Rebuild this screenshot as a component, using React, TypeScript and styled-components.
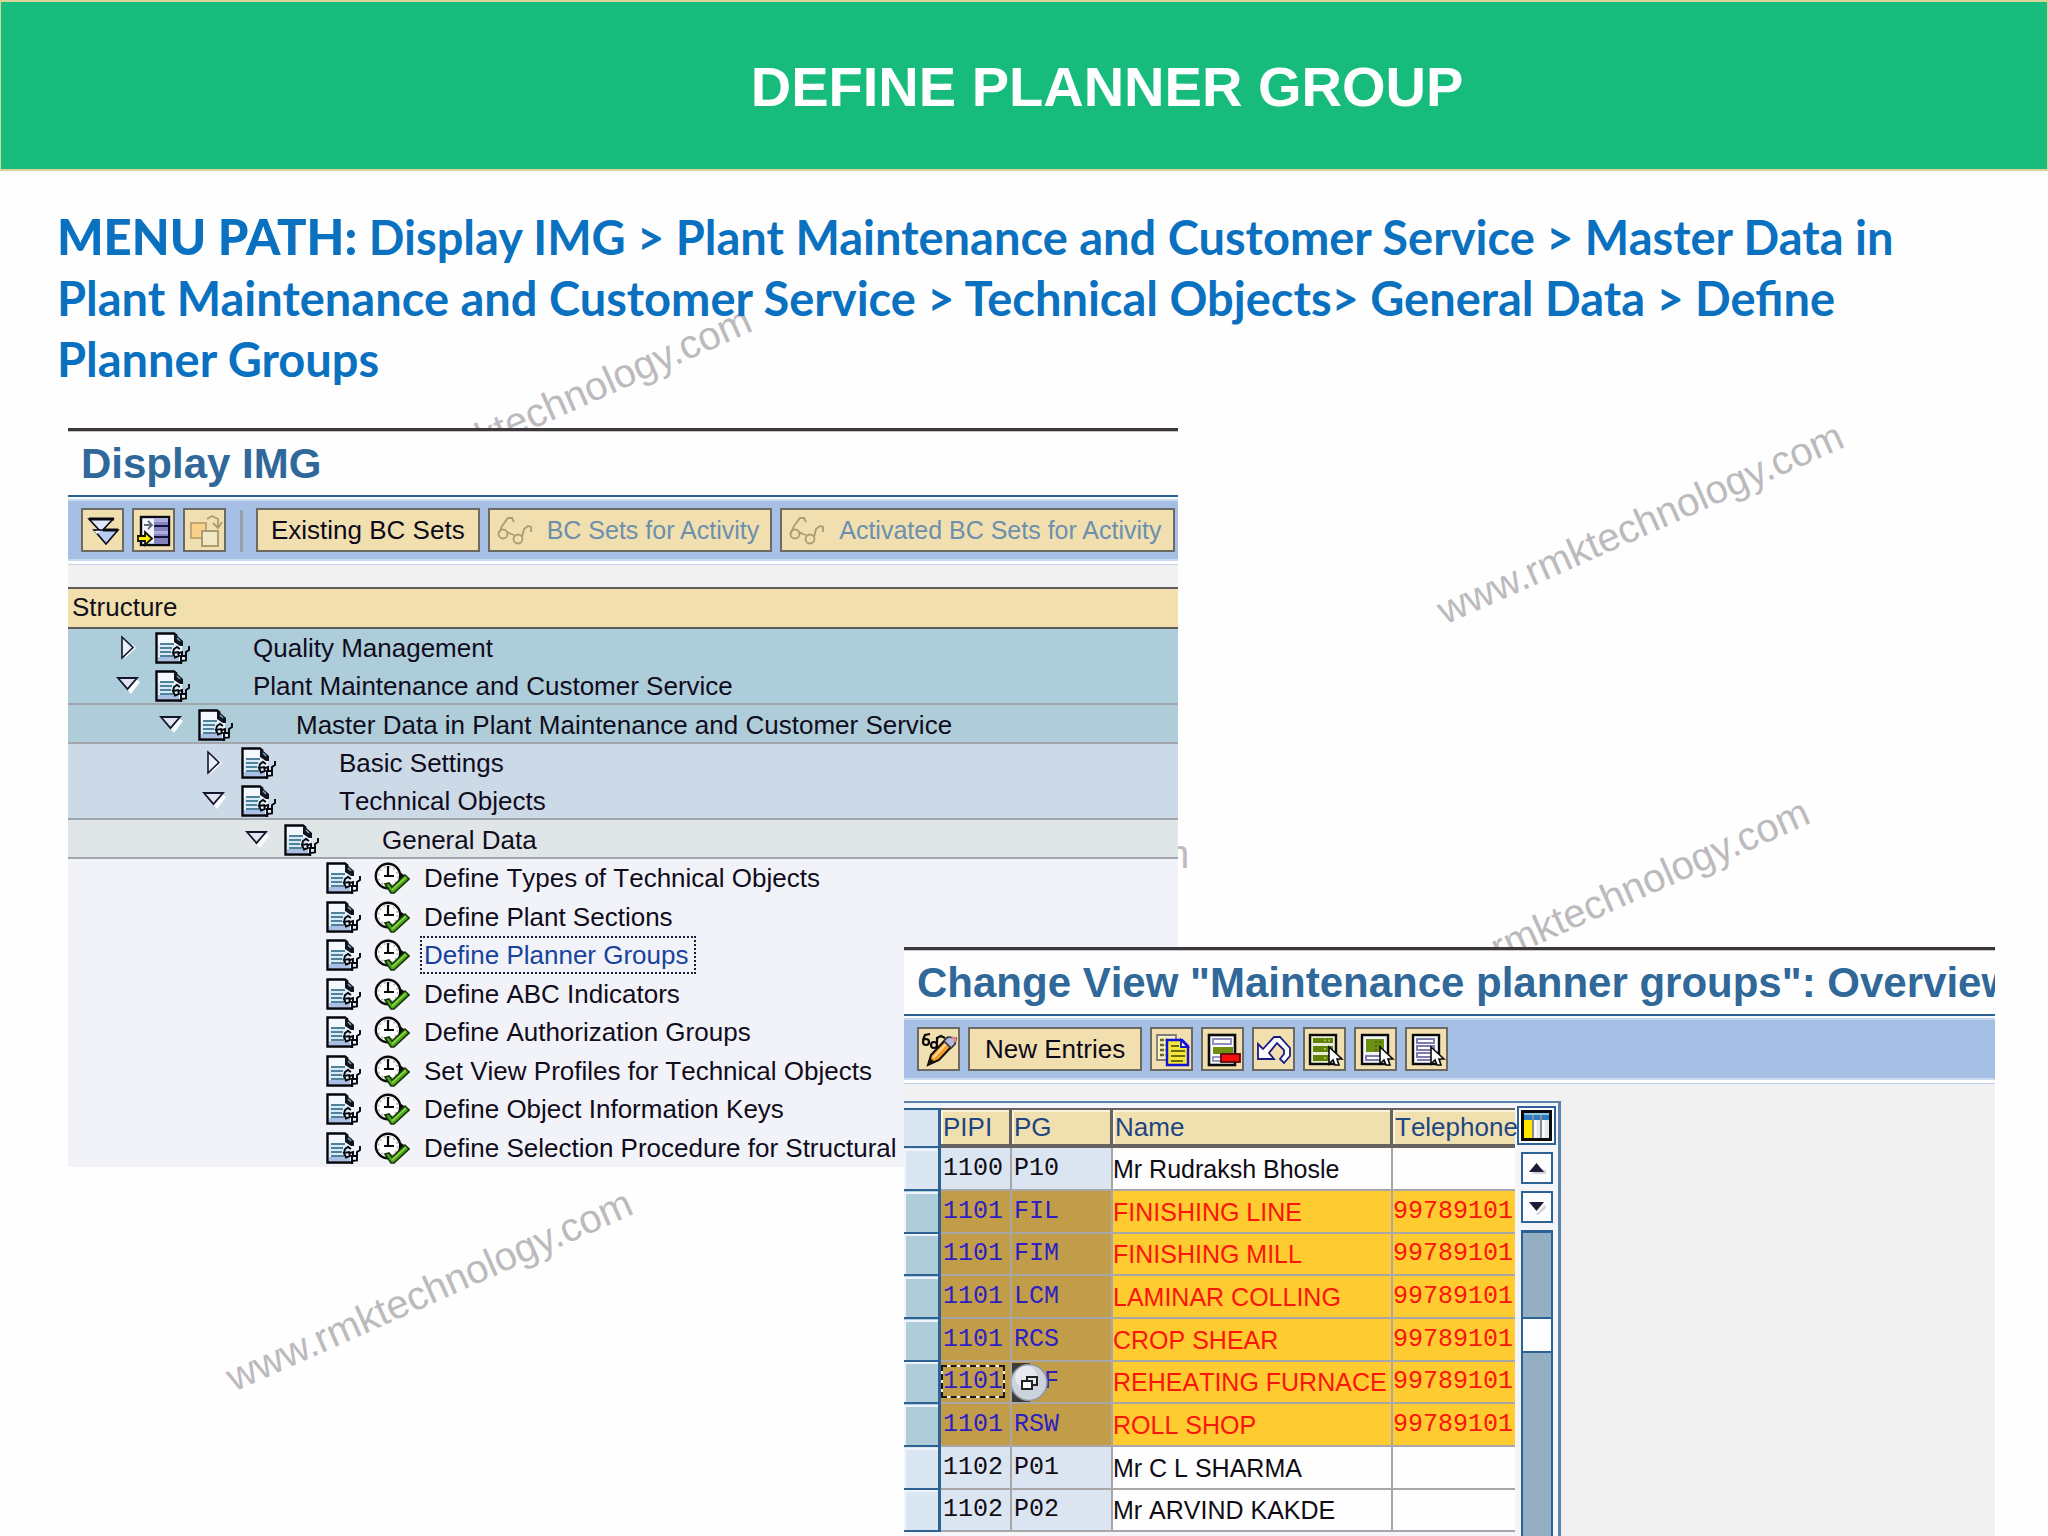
import React from "react";
import styled, { createGlobalStyle, css } from "styled-components";

const sans = `"Liberation Sans", Arial, sans-serif`;
const mono = `"Liberation Mono", "Courier New", monospace`;

const GlobalStyle = createGlobalStyle`
  *, *::before, *::after { box-sizing: border-box; }
  body { margin: 0; background: #fefefe; font-family: ${sans}; font-kerning: none; }
  svg { display: block; flex: none; }
`;

const Slide = styled.main`
  position: relative;
  display: flex;
  flex-direction: column;
  height: 100vh;
  overflow: hidden;
  background: #fefefe;
`;

const Banner = styled.header`
  flex: none;
  padding: 53px 0 50px 166px;
  border: 2px solid #d9d49b;
  border-width: 2px 1px;
  background: #17bc7c;
  text-align: center;
`;

const BannerTitle = styled.h1`
  margin: 0;
  color: #fff;
  font-size: 56px;
  line-height: 64px;
  font-weight: 700;
`;

const MenuPath = styled.p`
  position: relative;
  flex: none;
  margin: 0;
  padding: 35px 57px 38px;
  color: #0a70c0;
  font-family: Lato, "Open Sans", sans-serif;
  font-size: 47px;
  line-height: 61px;
  font-weight: 700;
  font-kerning: normal;
  white-space: nowrap;
`;

const MenuPathLabel = styled.strong`
  font-size: 49px;
`;

const Stage = styled.div`
  flex: 1;
  min-height: 0;
  display: grid;
  grid-template-columns: 68fr 836fr 274fr 817fr 53fr;
  grid-template-rows: 519px minmax(0, 1fr);
`;

const SapWindow = styled.section<{ $front?: boolean }>`
  position: relative;
  display: flex;
  flex-direction: column;
  min-width: 0;
  overflow: hidden;
  border-top: 3px solid #3b373b;
  background: #f1f1f2;
  ${({ $front }) =>
    $front
      ? css`
          grid-column: 3 / 5;
          grid-row: 2;
        `
      : css`
          grid-column: 2 / 4;
          grid-row: 1 / 3;
          align-self: start;
        `}
`;

const WindowTitle = styled.h2`
  flex: none;
  margin: 0;
  padding: 8px 13px 7px;
  border-top: 1px solid #c9c5c9;
  border-bottom: 2px solid #2c608f;
  background: #fefefe;
  color: #2f6899;
  font-size: 42px;
  line-height: 48px;
  font-weight: 700;
  white-space: nowrap;
  overflow: hidden;
`;

const Toolbar = styled.div`
  flex: none;
  display: flex;
  gap: 8px;
  padding: 7px 13px;
  background: #a5c0e4;
  box-shadow: 0 -2px 0 #c9d9ef, 0 -4px 0 #f4f8fd, 0 2px 0 #c9d9ef, 0 5px 0 #fff, 0 6px 0 #c5d3e8;
  margin: 4px 0 6px;
`;

const ToolButton = styled.button<{ $icon?: boolean; $dim?: boolean; $wide?: boolean }>`
  flex: none;
  display: flex;
  align-items: center;
  justify-content: center;
  gap: 14px;
  width: ${({ $icon }) => ($icon ? "43px" : "auto")};
  height: 44px;
  padding: 0 ${({ $icon, $dim, $wide }) => ($icon ? 0 : $dim ? 11 : $wide ? 15 : 13)}px;
  padding-left: ${({ $dim, $icon }) => ($dim && !$icon ? "7px" : undefined)};
  border: 2px solid #6c6862;
  border-radius: 0;
  background: #f1dfb0;
  color: ${({ $dim }) => ($dim ? "#6c8fae" : "#0c0a18")};
  font-family: ${sans};
  font-size: ${({ $dim }) => ($dim ? 25 : 26)}px;
  line-height: 32px;
  white-space: nowrap;
`;

const Divider = styled.span`
  flex: none;
  width: 3px;
  margin: 2px 5px 0 6px;
  background: #98a0ac;
`;

/* ---- structure tree ---- */

const StructureHeader = styled.div`
  margin-top: 22px;
  padding: 2px 4px 4px;
  border: 2px solid #5f5c5c;
  border-width: 2px 0;
  background: #f1e0ae;
  color: #14101a;
  font-size: 26px;
  line-height: 32px;
`;

const Tree = styled.ul`
  margin: 0;
  padding: 0;
  list-style: none;
  background: #f2f3f8;
`;

const levelFill = ["#aecddb", "#aecdd9", "#ccdae8", "#e0e5e8"];

const FolderRow = styled.li<{ $level: number; $line: boolean }>`
  display: flex;
  align-items: center;
  height: ${({ $level }) => ($level % 2 ? 39 : 38)}px;
  padding-left: ${({ $level }) => 48 + 43 * $level}px;
  background: ${({ $level }) => levelFill[$level]};
  box-shadow: ${({ $line }) => ($line ? "inset 0 -2px 0 #a2a6ac" : "none")};
  color: #100c1c;
  font-size: 26px;
  line-height: 36px;
  white-space: nowrap;
`;

const Arrow = styled.span`
  display: flex;
  justify-content: center;
  width: 24px;
  margin-right: 15px;
`;

const FolderName = styled.span`
  margin-left: 62px;
`;

const ActivityRow = styled.li`
  display: flex;
  align-items: center;
  height: 38px;
  padding-left: 258px;
  color: #100c1c;
  font-size: 26px;
  line-height: 34px;
  white-space: nowrap;
  &:nth-child(even) {
    height: 39px;
  }
  svg + svg {
    margin-left: 12px;
  }
`;

const ActivityName = styled.span<{ $active: boolean }>`
  margin-left: 10px;
  padding: 0 6px 0 2px;
  border: 2px dotted ${({ $active }) => ($active ? "#1c1c3c" : "transparent")};
  color: ${({ $active }) => ($active ? "#17439c" : "inherit")};
`;

/* ---- planner group table ---- */

const TableFrame = styled.div`
  flex: 1;
  align-self: flex-start;
  display: flex;
  margin-top: 17px;
  border: 2px solid #5b84ad;
  border-width: 2px 3px 0 0;
  background: #f3f5f8;
  min-height: 0;
`;

const Grid = styled.table`
  align-self: flex-start;
  margin-top: 5px;
  width: 611px;
  table-layout: fixed;
  border-collapse: separate;
  border-spacing: 0;
  color: #100c14;
`;

const Col = styled.col<{ $w: number }>`
  width: ${({ $w }) => $w}px;
`;

const Head = styled.th`
  height: 40px;
  padding: 0 0 0 2px;
  border: solid #65625f;
  border-width: 2px 3px 4px 0;
  background: #f0e0b0;
  box-shadow: inset 2px 2px 0 #faf3dc;
  color: #1f4680;
  font-size: 26px;
  line-height: 32px;
  font-weight: 400;
  text-align: left;
  white-space: nowrap;
  &:last-child {
    border-right: 0;
  }
`;

const CornerHead = styled.td`
  padding: 0;
  border: solid #2c6294;
  border-width: 2px 3px 2px 0;
  background: #d9e6f2;
`;

const Row = styled.tr`
  height: 43px;
  &:nth-child(3n) {
    height: 42px;
  }
`;

const SelectCell = styled.td<{ $marked: boolean }>`
  padding: 0;
  border: solid #2c6294;
  border-width: 0 3px 2px 0;
  background: ${({ $marked }) => ($marked ? "#aecdd9" : "#dae6f2")};
`;

const SelectButton = styled.button`
  display: block;
  width: 100%;
  height: 40px;
  padding: 0;
  border: solid #eef4fa;
  border-width: 2px 0 0 2px;
  background: transparent;
`;

const Cell = styled.td<{ $kind: "key" | "name" | "phone"; $marked: boolean }>`
  position: relative;
  padding: 0 0 0 ${({ $kind }) => ($kind === "key" ? 2 : 0)}px;
  border: solid #a9a6a8;
  border-width: 0 2px 2px 0;
  background: ${({ $kind, $marked }) =>
    $kind === "key" ? ($marked ? "#c29d49" : "#dbe5f1") : $marked ? "#fecb31" : "#fefefe"};
  color: ${({ $kind, $marked }) => ($marked ? ($kind === "key" ? "#2c1fc4" : "#fb1408") : "inherit")};
  font-family: ${({ $kind }) => ($kind === "name" ? sans : mono)};
  font-size: 25px;
  line-height: 32px;
  white-space: nowrap;
  &:last-child {
    border-right: 0;
  }
`;

const FocusedValue = styled.span`
  outline: 2px dashed #1a1620;
  box-shadow: 0 0 0 2px #f6ecd2;
`;

const PickBadge = styled.button`
  position: absolute;
  left: 0;
  top: 1px;
  padding: 0;
  border: 0;
  background: transparent;
`;

const ScrollColumn = styled.div`
  display: flex;
  flex-direction: column;
  align-items: center;
  gap: 7px;
  width: 43px;
  padding-top: 3px;
`;

const ConfigButton = styled.button`
  flex: none;
  position: relative;
  width: 39px;
  height: 39px;
  padding: 2px;
  border: 2px solid #2c6294;
  background: #fff;
`;

const ScrollButton = styled.button`
  flex: none;
  display: flex;
  align-items: center;
  justify-content: center;
  width: 32px;
  height: 32px;
  padding: 0;
  border: 2px solid #2c6294;
  background: #fdfdff;
`;

const Track = styled.div`
  flex: 1;
  width: 32px;
  padding-top: 84px;
  border: solid #2c6294;
  border-width: 3px 2px 0;
  background: #95afc2;
`;

const Thumb = styled.div`
  height: 36px;
  border: solid #2c6294;
  border-width: 2px 0;
  background: #fdfdff;
`;

const Watermark = styled.span<{ $x: number; $y: number; $angle: number }>`
  position: absolute;
  left: ${({ $x }) => $x}px;
  top: ${({ $y }) => $y}px;
  color: #bcbabd;
  font-size: 40px;
  line-height: 40px;
  font-kerning: normal;
  white-space: nowrap;
  transform: rotate(${({ $angle }) => $angle}deg);
  transform-origin: 0 34px;
`;

/* ---- icons ---- */

const DocIcon = () => (
  <svg width="36" height="32" viewBox="0 0 36 32" aria-hidden="true">
    <path d="M2 2H20L27 9V30H2Z" fill="#f4f9ff" />
    <path d="M3 13H24V24H3Z" fill="#d8ebf6" />
    <path d="M3 25H24V29H3Z" fill="#a9bfe6" />
    <path d="M5 12H19M5 16H17M5 20H16M5 24H18" stroke="#4f8299" strokeWidth="1.8" />
    <path d="M26 30.500H1.500V1.500H19L22 4" fill="none" stroke="#05060c" strokeWidth="2.4" />
    <path d="M19 1L28 9V14H25L19 10Z" fill="#10141c" />
    <path d="M22 6l3 3" stroke="#7fa0b8" strokeWidth="1.6" />
    <path d="M26 29v3" stroke="#05060c" strokeWidth="2.4" />
    <g fill="none" stroke="#05060c" strokeWidth="1.9">
      <path d="M18 21L19 17L22 15L25 17" />
      <path d="M18 21L20 25.500L24 24L23 20Z" fill="#e6f0f8" />
      <path d="M26 24L26 29L31 28.500L31 24Z" fill="#e6f0f8" />
      <path d="M24 21L27 20V24M31 24L31 20L34 18V14" />
    </g>
  </svg>
);

const ClockIcon = () => (
  <svg width="36" height="32" viewBox="0 0 36 32" aria-hidden="true">
    <path d="M27 12L34 17L29 22Z" fill="#4a7a18" stroke="#0c0f08" strokeWidth="2" />
    <circle cx="14" cy="14" r="12.2" fill="#fff" stroke="#0a0a0a" strokeWidth="2.4" />
    <circle cx="14" cy="14" r="9.5" fill="none" stroke="#b8bac2" strokeWidth="1.6" strokeDasharray="2 3" />
    <path d="M14 4V14H20M10 14H14" fill="none" stroke="#0a0a0a" strokeWidth="2.2" />
    <path d="M11 22L15 21L18 25L31 13L35 17L20 31H17Z" fill="#4ea81c" stroke="#16330a" strokeWidth="1.6" />
    <path d="M18 28L32 15" stroke="#8fd84a" strokeWidth="1.6" />
  </svg>
);

const ClosedArrow = () => (
  <svg width="16" height="26" viewBox="0 0 16 26" aria-hidden="true">
    <path d="M4 24L16 13L12 9L6 20Z" fill="#fafcff" />
    <path d="M2 2L13 12.5L2 23Z" fill="#e6eef8" stroke="#14142c" strokeWidth="1.6" />
  </svg>
);

const OpenArrow = () => (
  <svg width="24" height="20" viewBox="0 0 24 20" aria-hidden="true">
    <path d="M10 12L15 18L24 6L20 3Z" fill="#fafcff" />
    <path d="M2 2H21L11.5 13Z" fill="#dfe3f2" stroke="#14142c" strokeWidth="1.8" />
  </svg>
);

const ExpandIcon = () => (
  <svg width="36" height="36" viewBox="0 0 36 36" aria-hidden="true">
    <path d="M4 7H28L16 20Z" fill="#dfe9fb" stroke="#0a0a14" strokeWidth="1.6" />
    <path d="M4 7H29" stroke="#0a0a14" strokeWidth="3" />
    <path d="M9 18H33L21 32Z" fill="#b9cdf3" stroke="#0a0a14" strokeWidth="1.6" />
    <path d="M18 18H33" stroke="#0a0a14" strokeWidth="3" />
    <path d="M9 19L15 19L12 22Z" fill="#fff" />
  </svg>
);

const PositionIcon = () => (
  <svg width="36" height="36" viewBox="0 0 36 36" aria-hidden="true">
    <rect x="5" y="5" width="28" height="28" fill="#f3f5fb" stroke="#0a0a14" strokeWidth="2.4" />
    <rect x="18" y="6" width="14" height="26" fill="#8583bc" />
    <path d="M18 6H32V10H18ZM18 19H32V22H18Z" fill="#aeaede" />
    <path d="M18 14H32M18 25H32" stroke="#14143c" strokeWidth="1.8" />
    <path d="M8 13H16M12 9L16 13L12 17" fill="none" stroke="#5f6d80" strokeWidth="1.8" />
    <path d="M2 24H9V20L16 26.500L9 33V29H2Z" fill="#ffee00" stroke="#14140a" strokeWidth="1.8" />
  </svg>
);

const SwapIcon = () => (
  <svg width="36" height="36" viewBox="0 0 36 36" aria-hidden="true">
    <rect x="4" y="11" width="15" height="15" fill="#fbd08a" stroke="#b9a274" strokeWidth="1.8" />
    <rect x="15" y="19" width="16" height="15" fill="#f3e8c4" stroke="#a99c76" strokeWidth="2" />
    <path d="M20 7L25 4L31 7V15M26 11L31 16L35 10" fill="none" stroke="#a99c76" strokeWidth="1.8" />
  </svg>
);

const GlassesIcon = () => (
  <svg width="36" height="32" viewBox="0 0 36 32" aria-hidden="true">
    <g fill="none" stroke="#ab9c70" strokeWidth="1.8">
      <path d="M2 19L5 12L11 4H15L17 8" />
      <circle cx="6" cy="20" r="4.500" />
      <circle cx="21" cy="25" r="4.500" />
      <path d="M10 18L14 20L17 21M25 23L27 15L31 12L34 13V18" />
    </g>
  </svg>
);

const EditIcon = () => (
  <svg width="38" height="36" viewBox="0 0 38 36" aria-hidden="true">
    <g fill="none" stroke="#0a0a0a" strokeWidth="2.2">
      <circle cx="6" cy="11" r="3" />
      <circle cx="14" cy="14" r="3" />
      <path d="M3 9L5 4L10 3M17 12L17 7L21 5L25 7" />
    </g>
    <path d="M8 34L11 24L27 7L35 12L19 29Z" fill="#f59a23" stroke="#0a0a0a" strokeWidth="2" />
    <path d="M13 27L28 11" stroke="#ffd9a0" strokeWidth="2" />
    <path d="M24 10L28 6L36 7L35 13L31 17Z" fill="#b7b8dc" stroke="#33344c" strokeWidth="1.6" />
    <path d="M31 6H36V12Z" fill="#e08a84" />
    <path d="M8 34L10 27L15 31Z" fill="#1a140a" />
  </svg>
);

const CopyIcon = () => (
  <svg width="36" height="36" viewBox="0 0 36 36" aria-hidden="true">
    <path d="M3 4H22V29H3Z" fill="#f5efcb" stroke="#7f7d74" strokeWidth="1.8" />
    <path d="M6 9H14M6 14H12M6 19H12M6 24H12" stroke="#6b6a12" strokeWidth="2.6" strokeDasharray="4 1.500" />
    <path d="M13 9H28L34 15V34H13Z" fill="#f4e63a" stroke="#1512d6" strokeWidth="2.4" />
    <path d="M27 9V16H34Z" fill="#fff" stroke="#1512d6" strokeWidth="1.8" />
    <path d="M17 15H25M17 20H31M17 25H31M17 30H29" stroke="#6b6a12" strokeWidth="1.8" />
  </svg>
);

const DeleteIcon = () => (
  <svg width="36" height="36" viewBox="0 0 36 36" aria-hidden="true">
    <rect x="4" y="4" width="26" height="30" fill="#fbfbfd" stroke="#0a0a0a" strokeWidth="2.6" />
    <rect x="8" y="8" width="18" height="5" fill="#fff" stroke="#8f8fc0" strokeWidth="2" />
    <rect x="8" y="16" width="20" height="7" fill="#6d8f10" />
    <rect x="8" y="26" width="10" height="4" fill="#fff" stroke="#8f8fc0" strokeWidth="1.8" />
    <rect x="16" y="23" width="19" height="8" fill="#f60d0d" stroke="#5c0808" strokeWidth="1.8" />
  </svg>
);

const UndoIcon = () => (
  <svg width="38" height="36" viewBox="0 0 38 36" aria-hidden="true">
    <path
      d="M3 13L8 18L19 6H25L35 17V25L29 32L25 28L29 23V19L22 12L14 22L19 28H3Z"
      fill="#fbfbff"
      stroke="#1a1a84"
      strokeWidth="1.8"
    />
  </svg>
);

const Pointer = () => (
  <path d="M23 16V33L27 29L29 34H33L31 28H36Z" fill="#fff" stroke="#0a0a0a" strokeWidth="1.6" />
);

const SelectAllIcon = () => (
  <svg width="38" height="36" viewBox="0 0 38 36" aria-hidden="true">
    <rect x="4" y="4" width="26" height="29" fill="#e9ecd6" stroke="#0a0a0a" strokeWidth="2.4" />
    <path d="M7 7H27V12H7ZM7 15H27V21H7ZM7 24H27V30H7Z" fill="#5f8207" />
    <path d="M18 9.500H26M18 18H26M18 27H24" stroke="#a3c04e" strokeWidth="2" strokeDasharray="2 2" />
    <Pointer />
  </svg>
);

const SelectBlockIcon = () => (
  <svg width="38" height="36" viewBox="0 0 38 36" aria-hidden="true">
    <rect x="5" y="4" width="26" height="29" fill="#f3f4f8" stroke="#0a0a0a" strokeWidth="2.4" />
    <path d="M9 8H27V21H9Z" fill="#6d8f10" />
    <path d="M19 10V20M23 10V20" stroke="#4f6c06" strokeWidth="2" strokeDasharray="2 2" />
    <rect x="9" y="25" width="17" height="4" fill="#fff" stroke="#7c7cae" strokeWidth="2" />
    <Pointer />
  </svg>
);

const DeselectIcon = () => (
  <svg width="38" height="36" viewBox="0 0 38 36" aria-hidden="true">
    <rect x="5" y="4" width="26" height="29" fill="#fbfbfd" stroke="#0a0a0a" strokeWidth="2.4" />
    <g fill="#fff" stroke="#7c7cae" strokeWidth="2">
      <rect x="9" y="8" width="17" height="4" />
      <rect x="9" y="15" width="17" height="4" />
      <rect x="9" y="22" width="17" height="4" />
      <path d="M9 29H26" />
    </g>
    <Pointer />
  </svg>
);

const ConfigIcon = () => (
  <svg width="31" height="31" viewBox="0 0 31 31" aria-hidden="true">
    <rect x="1.500" y="1.500" width="28" height="28" fill="#e4e8ec" stroke="#0a0a0a" strokeWidth="3" />
    <rect x="3" y="3" width="25" height="7" fill="#2e7cc4" />
    <path d="M3 3H28V5H3Z" fill="#8ec4ea" />
    <rect x="3" y="10" width="8" height="18" fill="#ffe600" />
    <path d="M12 5V28M20 5V28" stroke="#8a8f94" strokeWidth="2" />
    <path d="M14.500 10V28M22.500 10V28" stroke="#fff" strokeWidth="2" />
  </svg>
);

const ScrollArrow = ({ down }: { down?: boolean }) => (
  <svg width="20" height="16" viewBox="0 0 20 16" aria-hidden="true">
    <path d={down ? "M9 15L18 6L19 9L11 16Z" : "M4 14H19V11L16 9Z"} fill="#d0d2dc" />
    <path d={down ? "M2 3H17L9.500 12Z" : "M2 12H17L9.500 3Z"} fill="#1c1c38" />
  </svg>
);

const BadgeIcon = () => (
  <svg width="36" height="39" viewBox="0 0 36 39" aria-hidden="true">
    <rect x="0" y="0" width="18" height="39" fill="#3d3a38" />
    <circle cx="17" cy="19.500" r="18" fill="#cdd3dc" stroke="#8f959e" strokeWidth="1.6" />
    <ellipse cx="14" cy="14" rx="11" ry="11" fill="#e6eaf0" />
    <rect x="15" y="14" width="10" height="8" fill="none" stroke="#222" strokeWidth="2" />
    <rect x="10" y="18" width="10" height="8" fill="#fff" stroke="#222" strokeWidth="2" />
  </svg>
);

/* ---- data ---- */

const folders = [
  { name: "Quality Management", level: 0, open: false, line: false },
  { name: "Plant Maintenance and Customer Service", level: 0, open: true, line: true },
  { name: "Master Data in Plant Maintenance and Customer Service", level: 1, open: true, line: true },
  { name: "Basic Settings", level: 2, open: false, line: false },
  { name: "Technical Objects", level: 2, open: true, line: true },
  { name: "General Data", level: 3, open: true, line: true },
];

const activities = [
  "Define Types of Technical Objects",
  "Define Plant Sections",
  "Define Planner Groups",
  "Define ABC Indicators",
  "Define Authorization Groups",
  "Set View Profiles for Technical Objects",
  "Define Object Information Keys",
  "Define Selection Procedure for Structural",
];

const rows = [
  { plant: "1100", group: "P10", name: "Mr Rudraksh Bhosle", phone: "" },
  { plant: "1101", group: "FIL", name: "FINISHING LINE", phone: "99789101" },
  { plant: "1101", group: "FIM", name: "FINISHING MILL", phone: "99789101" },
  { plant: "1101", group: "LCM", name: "LAMINAR COLLING", phone: "99789101" },
  { plant: "1101", group: "RCS", name: "CROP SHEAR", phone: "99789101" },
  { plant: "1101", group: "F", name: "REHEATING FURNACE", phone: "99789101", focused: true },
  { plant: "1101", group: "RSW", name: "ROLL SHOP", phone: "99789101" },
  { plant: "1102", group: "P01", name: "Mr C L SHARMA", phone: "" },
  { plant: "1102", group: "P02", name: "Mr ARVIND KAKDE", phone: "" },
];

const BadgedValue = styled.span`
  padding-left: 30px;
`;

const site = "www.rmktechnology.com";

export default function App() {
  return (
    <Slide>
      <GlobalStyle />
      <Watermark $x={353} $y={475} $angle={-24}>{site}</Watermark>
      <Watermark $x={1445} $y={591} $angle={-24}>{site}</Watermark>
      <Watermark $x={1411} $y={967} $angle={-24}>{site}</Watermark>
      <Watermark $x={234} $y={1358} $angle={-24}>{site}</Watermark>
      <Watermark $x={750} $y={834} $angle={0}>{site}</Watermark>

      <Banner>
        <BannerTitle>DEFINE PLANNER GROUP</BannerTitle>
      </Banner>

      <MenuPath>
        <MenuPathLabel>MENU PATH:</MenuPathLabel> Display IMG &gt; Plant Maintenance and Customer Service &gt; Master Data in
        <br />
        Plant Maintenance and Customer Service &gt; Technical Objects&gt; General Data &gt; Define
        <br />
        Planner Groups
      </MenuPath>

      <Stage>
        <SapWindow>
          <WindowTitle>Display IMG</WindowTitle>
          <Toolbar>
            <ToolButton $icon aria-label="Expand subtree"><ExpandIcon /></ToolButton>
            <ToolButton $icon aria-label="Position"><PositionIcon /></ToolButton>
            <ToolButton $icon $dim aria-label="Where used"><SwapIcon /></ToolButton>
            <Divider />
            <ToolButton>Existing BC Sets</ToolButton>
            <ToolButton $dim><GlassesIcon />BC Sets for Activity</ToolButton>
            <ToolButton $dim><GlassesIcon />Activated BC Sets for Activity</ToolButton>
          </Toolbar>
          <StructureHeader>Structure</StructureHeader>
          <Tree>
            {folders.map((f) => (
              <FolderRow key={f.name} $level={f.level} $line={f.line}>
                <Arrow>{f.open ? <OpenArrow /> : <ClosedArrow />}</Arrow>
                <DocIcon />
                <FolderName>{f.name}</FolderName>
              </FolderRow>
            ))}
            {activities.map((name) => (
              <ActivityRow key={name}>
                <DocIcon />
                <ClockIcon />
                <ActivityName $active={name === "Define Planner Groups"}>{name}</ActivityName>
              </ActivityRow>
            ))}
          </Tree>
        </SapWindow>

        <SapWindow $front>
          <WindowTitle>Change View "Maintenance planner groups": Overview</WindowTitle>
          <Toolbar>
            <ToolButton $icon aria-label="Display or change"><EditIcon /></ToolButton>
            <ToolButton $wide>New Entries</ToolButton>
            <ToolButton $icon aria-label="Copy as"><CopyIcon /></ToolButton>
            <ToolButton $icon aria-label="Delete"><DeleteIcon /></ToolButton>
            <ToolButton $icon aria-label="Undo change"><UndoIcon /></ToolButton>
            <ToolButton $icon aria-label="Select all"><SelectAllIcon /></ToolButton>
            <ToolButton $icon aria-label="Select block"><SelectBlockIcon /></ToolButton>
            <ToolButton $icon aria-label="Deselect all"><DeselectIcon /></ToolButton>
          </Toolbar>
          <TableFrame>
            <Grid>
              <colgroup>
                <Col $w={37} />
                <Col $w={71} />
                <Col $w={101} />
                <Col $w={280} />
                <Col $w={122} />
              </colgroup>
              <thead>
                <tr>
                  <CornerHead />
                  <Head>PIPI</Head>
                  <Head>PG</Head>
                  <Head>Name</Head>
                  <Head>Telephone</Head>
                </tr>
              </thead>
              <tbody>
                {rows.map((r) => {
                  const marked = r.plant === "1101";
                  return (
                    <Row key={r.name}>
                      <SelectCell $marked={marked}>
                        <SelectButton aria-label={`Select ${r.name}`} />
                      </SelectCell>
                      <Cell $kind="key" $marked={marked}>
                        {r.focused ? <FocusedValue>{r.plant}</FocusedValue> : r.plant}
                      </Cell>
                      <Cell $kind="key" $marked={marked}>
                        {r.focused ? (
                          <>
                            <PickBadge aria-label="Possible entries"><BadgeIcon /></PickBadge>
                            <BadgedValue>{r.group}</BadgedValue>
                          </>
                        ) : (
                          r.group
                        )}
                      </Cell>
                      <Cell $kind="name" $marked={marked}>{r.name}</Cell>
                      <Cell $kind="phone" $marked={marked}>{r.phone}</Cell>
                    </Row>
                  );
                })}
              </tbody>
            </Grid>
            <ScrollColumn>
              <ConfigButton aria-label="Table settings"><ConfigIcon /></ConfigButton>
              <ScrollButton aria-label="Scroll up"><ScrollArrow /></ScrollButton>
              <ScrollButton aria-label="Scroll down"><ScrollArrow down /></ScrollButton>
              <Track>
                <Thumb />
              </Track>
            </ScrollColumn>
          </TableFrame>
        </SapWindow>
      </Stage>
    </Slide>
  );
}
